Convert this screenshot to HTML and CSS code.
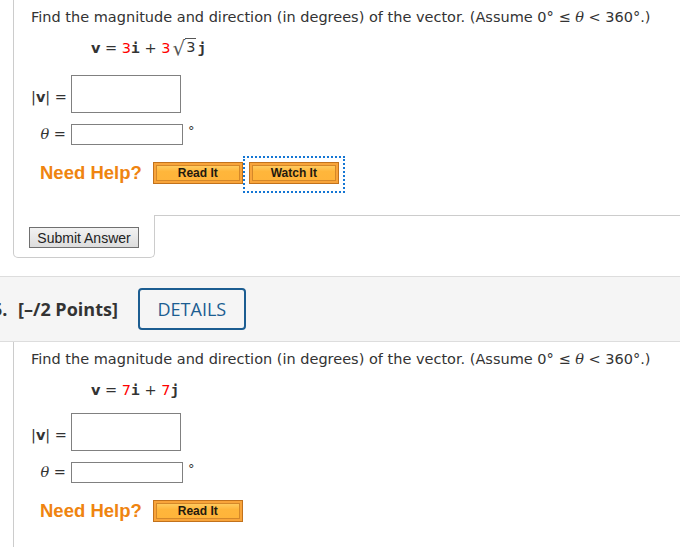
FILE: index.html
```html
<!DOCTYPE html>
<html>
<head>
<meta charset="utf-8">
<link rel="stylesheet" href="styles.css">
</head>
<body>
<div class="q">
  <div class="qbody">
    <p class="prompt">Find the magnitude and direction (in degrees) of the vector. (Assume 0° ≤ <i class="th">θ</i> &lt; 360°.)</p>
    <div class="eq eq-tall"><b class="v">v</b> = <span class="red">3</span><b class="ij">i</b> + <span class="red">3</span><span class="rad"><span class="radsign">√</span><span class="radicand">3</span></span><b class="ij">j</b></div>
    <div class="ans ans-mag"><span class="lbl">|<b class="v">v</b>| =</span><span class="box big"></span></div>
    <div class="ans ans-dir"><span class="lbl"><i class="th">θ</i> =</span><span class="box small"></span><span class="deg">°</span></div>
    <div class="help">
      <span class="needhelp">Need Help?</span>
      <span class="obtn"><span class="oin">Read It</span></span>
      <span class="focus"><span class="obtn"><span class="oin">Watch It</span></span></span>
    </div>
  </div>
  <div class="tabrow">
    <div class="tab"><button class="submit">Submit Answer</button></div>
    <div class="tabfill"></div>
  </div>
</div>

<div class="qhead">
  <span class="qnum">5.</span>
  <span class="pts">[–/2 Points]</span>
  <span class="details">DETAILS</span>
</div>

<div class="q">
  <div class="qbody qbody2">
    <p class="prompt">Find the magnitude and direction (in degrees) of the vector. (Assume 0° ≤ <i class="th">θ</i> &lt; 360°.)</p>
    <div class="eq"><b class="v">v</b> = <span class="red">7</span><b class="ij">i</b> + <span class="red">7</span><b class="ij">j</b></div>
    <div class="ans ans-mag"><span class="lbl">|<b class="v">v</b>| =</span><span class="box big"></span></div>
    <div class="ans ans-dir"><span class="lbl"><i class="th">θ</i> =</span><span class="box small"></span><span class="deg">°</span></div>
    <div class="help">
      <span class="needhelp">Need Help?</span>
      <span class="obtn"><span class="oin">Read It</span></span>
    </div>
  </div>
</div>
</body>
</html>
```

FILE: styles.css
```css
html, body {
  margin: 0;
  padding: 0;
  background: #fff;
}
body {
  width: 680px;
  height: 547px;
  overflow: hidden;
  font-family: "DejaVu Sans", Verdana, sans-serif;
  color: #333;
}
.q {
  margin-left: 13px;
}
.qbody {
  border-left: 1px solid #ccc;
  padding-left: 17px;
  height: 215px;
  box-sizing: border-box;
  padding-top: 8px;
}
.qbody2 {
  height: 206px;
}
.prompt {
  margin: 0;
  font-size: 14.5px;
  line-height: 18px;
  height: 18px;
  white-space: nowrap;
}
.th {
  font-family: "DejaVu Serif", serif;
  font-style: italic;
}
.eq {
  margin: 12px 0 0 60px;
  font-size: 14.5px;
  line-height: 20px;
  height: 20px;
  white-space: nowrap;
}
.eq-tall {
  padding-bottom: 4px;
}
.v {
  font-weight: bold;
}
.red {
  color: #f00;
}
.ij {
  font-family: "DejaVu Sans Mono", monospace;
  font-weight: bold;
}
.rad {
  display: inline-flex;
  align-items: flex-end;
  margin-left: 2px;
  margin-right: 1px;
  vertical-align: -2px;
}
.radsign {
  font-size: 20px;
  line-height: 20px;
  color: #555;
}
.radicand {
  border-top: 1px solid #555;
  line-height: 17px;
  padding: 0 1px;
  margin-bottom: 2px;
}
.ans {
  display: flex;
  align-items: center;
}
.ans-mag {
  margin-top: 13px;
}
.ans-dir {
  margin-top: 11px;
  align-items: flex-start;
}
.lbl {
  width: 35px;
  margin-right: 5px;
  text-align: right;
  font-size: 14.5px;
  white-space: nowrap;
}
.ans-mag .lbl {
  padding-top: 6px;
}
.ans-dir .lbl {
  line-height: 21px;
}
.box {
  display: block;
  box-sizing: border-box;
  border: 1px solid #808080;
  background: #fff;
}
.big {
  width: 110px;
  height: 38px;
}
.small {
  width: 112px;
  height: 21px;
}
.deg {
  font-size: 13px;
  margin-left: 5px;
  line-height: 14px;
}
.help {
  margin-top: 17px;
  display: flex;
  align-items: flex-start;
  height: 31px;
}
.needhelp {
  font-family: "Liberation Sans", Arial, sans-serif;
  font-weight: bold;
  font-size: 18.5px;
  color: #ef8410;
  margin-left: 9px;
  margin-right: 11px;
  line-height: 21px;
}
.obtn {
  display: inline-flex;
  box-sizing: border-box;
  width: 90px;
  height: 22px;
  border: 1px solid #c2721c;
  background: #f8a43a;
  padding: 2px;
}
.oin {
  flex: 1;
  display: flex;
  align-items: center;
  justify-content: center;
  border: 1px solid #d48729;
  background: linear-gradient(#ffca5e, #ffb63b 40%, #ffb43a);
  font-family: "Liberation Sans", Arial, sans-serif;
  font-weight: bold;
  font-size: 12px;
  color: #1f1a10;
}
.focus {
  display: inline-flex;
  margin-left: 2px;
  margin-top: -4px;
  padding: 4px 4px 7px 4px;
  outline: 2px dotted #1476d4;
}
.tabrow {
  display: flex;
  align-items: flex-start;
}
.tab {
  box-sizing: border-box;
  width: 142px;
  border: 1px solid #ccc;
  border-top: none;
  border-radius: 0 0 5px 5px;
  padding: 12px 0 9px 15px;
}
.tabfill {
  flex: 1;
  border-top: 1px solid #ccc;
}
.submit {
  display: block;
  box-sizing: border-box;
  width: 110px;
  height: 21px;
  margin: 0;
  padding: 0;
  border: 1px solid #707070;
  border-radius: 0;
  background: linear-gradient(#f2f2f2, #dddddd);
  font-family: "Liberation Sans", Arial, sans-serif;
  font-size: 14px;
  color: #222;
}
.qhead {
  margin-top: 18px;
  height: 64px;
  background: #f5f5f5;
  border-top: 1px solid #ddd;
  border-bottom: 1px solid #ddd;
  display: flex;
  align-items: center;
  font-family: "Open Sans", sans-serif;
  white-space: nowrap;
}
.qnum {
  font-weight: bold;
  font-size: 18px;
  color: #333;
  margin-left: -8px;
  width: 26px;
}
.pts {
  font-weight: bold;
  font-size: 18px;
  color: #333;
}
.details {
  margin-left: 20px;
  box-sizing: border-box;
  width: 108px;
  height: 42px;
  border: 2px solid #1c5d91;
  border-radius: 4px;
  color: #1c5d91;
  font-size: 18px;
  display: flex;
  align-items: center;
  justify-content: center;
}
```
